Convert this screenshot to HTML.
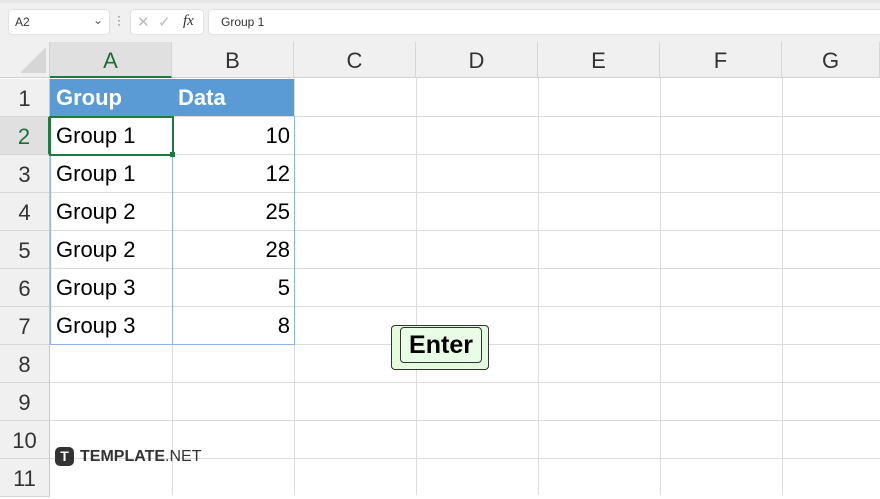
<!DOCTYPE html>
<html><head><style>
body{margin:0;width:880px;height:495px;overflow:hidden;background:#fff;font-family:"Liberation Sans",sans-serif;position:relative}
.a{position:absolute}
.top{left:0;top:0;width:880px;height:42px;background:#f0f0f0}
.box{background:#fff;border:1px solid #e2e2e2;border-radius:4px;height:24px;top:9px}
.ch{top:42px;height:36px;background:#f0f0f0;border-right:1px solid #d6d6d6;border-bottom:1px solid #d0d0d0;font-size:22px;color:#333;text-align:center;line-height:38px;box-sizing:border-box}
.rh{left:0;width:50px;height:38px;background:#f0f0f0;border-bottom:1px solid #d6d6d6;border-right:1px solid #c8c8c8;font-size:22px;color:#333;text-align:center;line-height:40px;box-sizing:border-box}
.vl{top:78px;width:1px;height:417px;background:#dcdcdc}
.hl{left:50px;width:830px;height:1px;background:#dcdcdc}
.c{font-size:22px;color:#000;line-height:38px;height:38px}
</style></head><body>
<div class="a top"></div>
<div class="a" style="left:0;top:0;width:880px;height:3px;background:#e6e6e6"></div>
<div class="a box" style="left:8px;width:100px"><span class="a" style="left:6px;top:5px;font-size:12px;color:#333">A2</span><span class="a" style="left:84px;top:3px;font-size:12px;color:#555">&#8964;</span></div>
<div class="a" style="left:117px;top:14px;font-size:12px;color:#666;line-height:4px">·<br>·<br>·</div>
<div class="a box" style="left:130px;width:72px"><span class="a" style="left:6px;top:3px;font-size:15px;color:#bbb">✕</span><span class="a" style="left:27px;top:3px;font-size:15px;color:#bbb">✓</span><span class="a" style="left:52px;top:3px;font-size:15px;color:#333;font-family:'Liberation Serif';font-style:italic">fx</span></div>
<div class="a box" style="left:208px;width:680px"><span class="a" style="left:12px;top:5px;font-size:12px;color:#333">Group 1</span></div>
<div class="a" style="left:0;top:42px;width:50px;height:36px;background:#f0f0f0;border-right:1px solid #d0d0d0;border-bottom:1px solid #d0d0d0;box-sizing:border-box"></div>
<div class="a" style="left:20px;top:47px;width:0;height:0;border-left:26px solid transparent;border-bottom:26px solid #d6d6d6"></div>
<div class="a ch" style="left:50px;width:122px;background:#e0e0e0;color:#1f6e3a;border-bottom:2px solid #1f7a3f">A</div>
<div class="a ch" style="left:172px;width:122px">B</div>
<div class="a ch" style="left:294px;width:122px">C</div>
<div class="a ch" style="left:416px;width:122px">D</div>
<div class="a ch" style="left:538px;width:122px">E</div>
<div class="a ch" style="left:660px;width:122px">F</div>
<div class="a ch" style="left:782px;width:98px">G</div>
<div class="a rh" style="top:79px">1</div>
<div class="a rh" style="top:117px;background:#e0e0e0;color:#1f6e3a;border-right:2px solid #1f7a3f">2</div>
<div class="a rh" style="top:155px">3</div>
<div class="a rh" style="top:193px">4</div>
<div class="a rh" style="top:231px">5</div>
<div class="a rh" style="top:269px">6</div>
<div class="a rh" style="top:307px">7</div>
<div class="a rh" style="top:345px">8</div>
<div class="a rh" style="top:383px">9</div>
<div class="a rh" style="top:421px">10</div>
<div class="a rh" style="top:459px">11</div>
<div class="a vl" style="left:172px"></div><div class="a vl" style="left:294px"></div><div class="a vl" style="left:416px"></div><div class="a vl" style="left:538px"></div><div class="a vl" style="left:660px"></div><div class="a vl" style="left:782px"></div>
<div class="a hl" style="top:116px"></div><div class="a hl" style="top:154px"></div><div class="a hl" style="top:192px"></div><div class="a hl" style="top:230px"></div><div class="a hl" style="top:268px"></div><div class="a hl" style="top:306px"></div><div class="a hl" style="top:344px"></div><div class="a hl" style="top:382px"></div><div class="a hl" style="top:420px"></div><div class="a hl" style="top:458px"></div>
<div class="a" style="left:50px;top:79px;width:244px;height:37px;background:#5b9bd5"></div>
<div class="a" style="left:50px;top:116px;width:243px;height:228px;border:1px solid #8db4e2;border-top:none"></div>
<div class="a" style="left:172px;top:116px;width:1px;height:229px;background:#8db4e2"></div>
<div class="a c" style="left:56px;top:79px;color:#fff;font-weight:bold">Group</div>
<div class="a c" style="left:178px;top:79px;color:#fff;font-weight:bold">Data</div>
<div class="a c" style="left:56px;top:117px">Group 1</div><div class="a c" style="left:172px;width:118px;text-align:right;top:117px">10</div>
<div class="a c" style="left:56px;top:155px">Group 1</div><div class="a c" style="left:172px;width:118px;text-align:right;top:155px">12</div>
<div class="a c" style="left:56px;top:193px">Group 2</div><div class="a c" style="left:172px;width:118px;text-align:right;top:193px">25</div>
<div class="a c" style="left:56px;top:231px">Group 2</div><div class="a c" style="left:172px;width:118px;text-align:right;top:231px">28</div>
<div class="a c" style="left:56px;top:269px">Group 3</div><div class="a c" style="left:172px;width:118px;text-align:right;top:269px">5</div>
<div class="a c" style="left:56px;top:307px">Group 3</div><div class="a c" style="left:172px;width:118px;text-align:right;top:307px">8</div>
<div class="a" style="left:49px;top:116px;width:121px;height:36px;border:2px solid #1f7a3f"></div>
<div class="a" style="left:170px;top:152px;width:5px;height:5px;background:#1f7a3f"></div>
<div class="a" style="left:391px;top:325px;width:96px;height:43px;background:#e4fbe0;border:1px solid #333;border-radius:4px"></div>
<div class="a" style="left:400px;top:327px;width:80px;height:34px;border:1px solid #333;border-radius:4px;background:#e9fde6;font-weight:bold;font-size:25px;text-align:center;line-height:34px">Enter</div>
<div class="a" style="left:55px;top:447px;width:19px;height:19px;background:#333;border-radius:5px;color:#fff;font-weight:bold;font-size:14px;text-align:center;line-height:19px">T</div>
<div class="a" style="left:80px;top:447px;font-size:16px;color:#333;line-height:19px"><b>TEMPLATE</b>.NET</div>
</body></html>
